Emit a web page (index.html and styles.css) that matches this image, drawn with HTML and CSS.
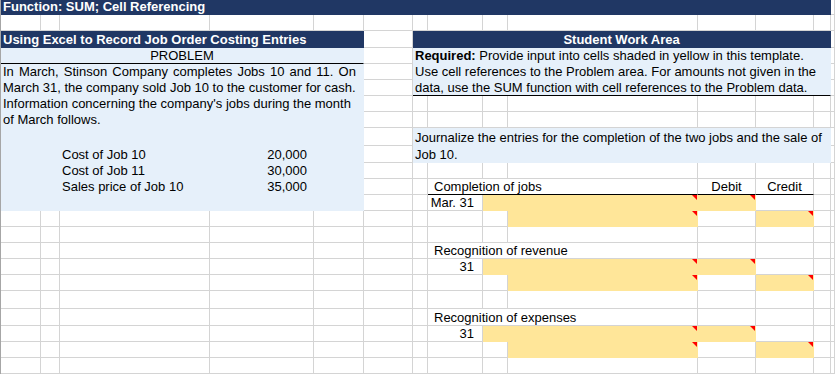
FILE: index.html
```html
<!DOCTYPE html>
<html lang="en">
<head>
<meta charset="utf-8">
<title>Function: SUM; Cell Referencing</title>
<link rel="stylesheet" href="styles.css">
</head>
<body>
<table class="sheet">
<colgroup>
<col class="w40"><col class="w19"><col class="w150"><col class="w104"><col class="w50"><col class="w49"><col class="w15"><col class="w55"><col class="w25"><col class="w190"><col class="w58"><col class="w58"><col class="w17"><col class="w4">
</colgroup>
<tbody>
<tr class="h15"><td colspan="13" class="navy title">Function: SUM; Cell Referencing</td><td></td></tr>
<tr class="h16"><td></td><td></td><td></td><td></td><td></td><td></td><td></td><td></td><td></td><td></td><td></td><td></td><td></td><td></td></tr>
<tr class="h17"><td colspan="5" class="navy hd">Using Excel to Record Job Order Costing Entries</td><td></td><td colspan="7" class="navy hd ctr">Student Work Area</td><td></td></tr>
<tr class="h16"><td colspan="5" class="blue ctr ul">PROBLEM</td><td></td><td colspan="7" class="blue"><b>Required:</b> Provide input into cells shaded in yellow in this template.</td><td></td></tr>
<tr class="h16"><td colspan="5" class="blue wide">In March, Stinson Company completes Jobs 10 and 11. On</td><td></td><td colspan="7" class="blue">Use cell references to the Problem area. For amounts not given in the</td><td></td></tr>
<tr class="h16"><td colspan="5" class="blue">March 31, the company sold Job 10 to the customer for cash.</td><td></td><td colspan="7" class="blue ul">data, use the SUM function with cell references to the Problem data.</td><td></td></tr>
<tr class="h16"><td colspan="5" class="blue">Information concerning the company's jobs during the month</td><td></td><td></td><td></td><td></td><td></td><td></td><td></td><td></td><td></td></tr>
<tr class="h16"><td colspan="5" class="blue">of March follows.</td><td></td><td></td><td></td><td></td><td></td><td></td><td></td><td></td><td></td></tr>
<tr class="h18"><td colspan="5" class="blue"></td><td></td><td colspan="7" class="blue">Journalize the entries for the completion of the two jobs and the sale of</td><td></td></tr>
<tr class="h17"><td colspan="2" class="blue"></td><td class="blue">Cost of Job 10</td><td class="blue num">20,000</td><td class="blue"></td><td></td><td colspan="7" class="blue">Job 10.</td><td></td></tr>
<tr class="h16"><td colspan="2" class="blue"></td><td class="blue">Cost of Job 11</td><td class="blue num">30,000</td><td class="blue"></td><td></td><td></td><td></td><td></td><td></td><td></td><td></td><td></td><td></td></tr>
<tr class="h16"><td colspan="2" class="blue"></td><td class="blue">Sales price of Job 10</td><td class="blue num">35,000</td><td class="blue"></td><td></td><td></td><td colspan="3" class="ul ind">Completion of jobs</td><td class="ul ctr">Debit</td><td class="ul ctr">Credit</td><td></td><td></td></tr>
<tr class="h16"><td colspan="5" class="blue"></td><td></td><td></td><td class="rt">Mar. 31</td><td colspan="2" class="yel note"></td><td class="yel note"></td><td></td><td></td><td></td></tr>
<tr class="h16"><td></td><td></td><td></td><td></td><td></td><td></td><td></td><td></td><td></td><td class="yel note"></td><td></td><td class="yel note"></td><td></td><td></td></tr>
<tr class="h16"><td></td><td></td><td></td><td></td><td></td><td></td><td></td><td></td><td></td><td></td><td></td><td></td><td></td><td></td></tr>
<tr class="h16"><td></td><td></td><td></td><td></td><td></td><td></td><td></td><td colspan="3" class="ind">Recognition of revenue</td><td></td><td></td><td></td><td></td></tr>
<tr class="h16"><td></td><td></td><td></td><td></td><td></td><td></td><td></td><td class="rt">31</td><td colspan="2" class="yel note"></td><td class="yel note"></td><td></td><td></td><td></td></tr>
<tr class="h16"><td></td><td></td><td></td><td></td><td></td><td></td><td></td><td></td><td></td><td class="yel note"></td><td></td><td class="yel note"></td><td></td><td></td></tr>
<tr class="h18"><td></td><td></td><td></td><td></td><td></td><td></td><td></td><td></td><td></td><td></td><td></td><td></td><td></td><td></td></tr>
<tr class="h17"><td></td><td></td><td></td><td></td><td></td><td></td><td></td><td colspan="3" class="ind">Recognition of expenses</td><td></td><td></td><td></td><td></td></tr>
<tr class="h16"><td></td><td></td><td></td><td></td><td></td><td></td><td></td><td class="rt">31</td><td colspan="2" class="yel note"></td><td class="yel note"></td><td></td><td></td><td></td></tr>
<tr class="h16"><td></td><td></td><td></td><td></td><td></td><td></td><td></td><td></td><td></td><td class="yel note"></td><td></td><td class="yel note"></td><td></td><td></td></tr>
<tr class="h16"><td></td><td></td><td></td><td></td><td></td><td></td><td></td><td></td><td></td><td></td><td></td><td></td><td></td><td></td></tr>
</tbody>
</table>
</body>
</html>
```
FILE: styles.css
```css
* { box-sizing: border-box; }
html, body { margin: 0; padding: 0; background: #fff; overflow: hidden; }
body { width: 835px; height: 376px; }

.sheet {
  table-layout: fixed;
  border-collapse: separate;
  border-spacing: 0;
  width: 835px;
  border-left: 1px solid #a6a6a6;
  font-family: "Liberation Sans", Arial, sans-serif;
  font-size: 13px;
  color: #000;
}

.w40 { width: 40px; } .w19 { width: 19px; } .w150 { width: 150px; }
.w104 { width: 104px; } .w50 { width: 50px; } .w49 { width: 49px; }
.w15 { width: 15px; } .w55 { width: 55px; } .w25 { width: 25px; }
.w190 { width: 190px; } .w58 { width: 58px; } .w17 { width: 17px; }
.w4 { width: 4px; }

.h15 { height: 15px; } .h16 { height: 16px; } .h17 { height: 17px; } .h18 { height: 18px; }

.sheet td {
  position: relative;
  padding: 1px 2px 0;
  line-height: 14px;
  white-space: nowrap;
  overflow: visible;
  vertical-align: bottom;
  border-right: 1px solid #d4d4d4;
  border-bottom: 1px solid #d4d4d4;
}

.sheet td.navy { background: #203764; color: #fff; font-weight: bold; border-color: transparent; }
.sheet td.title { padding-top: 0; line-height: 14px; }
.sheet td.blue { background: #e6f0fa; border-color: transparent; }
.sheet td.yel { background: #ffe699; border-color: transparent; }
.sheet td.ul { border-bottom-color: #000; }
.sheet td.wide { word-spacing: 1.5px; }
.ctr { text-align: center; }
.sheet td.num { text-align: right; padding-right: 6px; }
.sheet td.rt { text-align: right; padding-right: 8px; }
.sheet td.ind { padding-left: 6px; }

.note::after {
  content: "";
  position: absolute;
  top: 0;
  right: 0;
  width: 0;
  height: 0;
  border-top: 5px solid #ff0000;
  border-left: 5px solid transparent;
}
```
